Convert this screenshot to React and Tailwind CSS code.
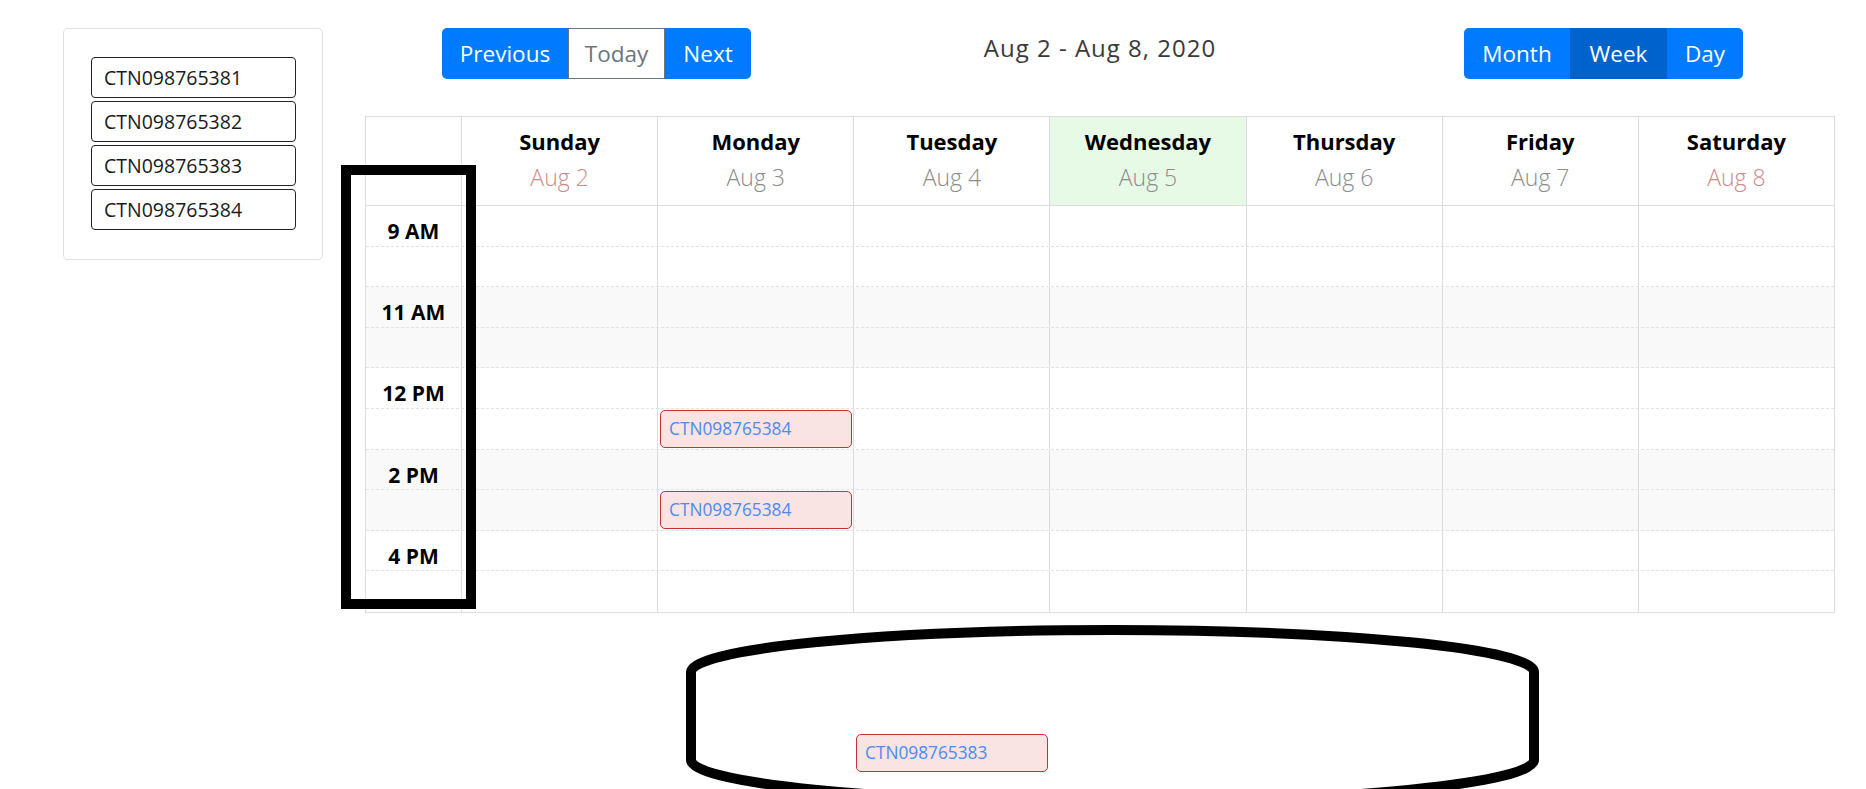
import React from "react";

const ITEMS = ["CTN098765381", "CTN098765382", "CTN098765383", "CTN098765384"];

const DAYS = [
  { name: "Sunday", date: "Aug 2", weekend: true },
  { name: "Monday", date: "Aug 3" },
  { name: "Tuesday", date: "Aug 4" },
  { name: "Wednesday", date: "Aug 5", today: true },
  { name: "Thursday", date: "Aug 6" },
  { name: "Friday", date: "Aug 7" },
  { name: "Saturday", date: "Aug 8", weekend: true },
];

const GROUPS = ["9 AM", "11 AM", "12 PM", "2 PM", "4 PM"];

const EVENTS = [
  { title: "CTN098765384", top: "top-[204px]" },
  { title: "CTN098765384", top: "top-[285px]" },
];

const EventChip = ({ title, className = "" }) => (
  <div
    className={`h-[38px] w-[192px] flex items-center pl-[8px] rounded-[5px] border border-[#c23434] bg-[#f9e3e3] text-[#4a8cf0] text-[17.3px] ${className}`}
  >
    {title}
  </div>
);

const SlotRow = ({ last }) => (
  <div
    className={`flex h-[40.6px] ${last ? "" : "border-b border-dashed border-[#e2e2e2]"}`}
  >
    <div className="w-[96px] shrink-0 border-r border-[#dddddd]" />
    {DAYS.map((d, i) => (
      <div
        key={d.name}
        className={`flex-1 ${i < 6 ? "border-r border-[#dddddd]" : ""}`}
      />
    ))}
  </div>
);

export default function App() {
  return (
    <div
      className="relative w-[1866px] h-[789px] overflow-hidden bg-white"
      style={{ fontFamily: '"Open Sans", "Noto Sans", sans-serif' }}
    >
      <div className="flex pl-[63px] pt-[28px] gap-[42px]">
        {/* sidebar list */}
        <aside className="w-[260px] self-start border border-[#e0e0e0] rounded-[5px] px-[27px] pt-[28px] pb-[29px] flex flex-col gap-[3px]">
          {ITEMS.map((item) => (
            <div
              key={item}
              className="h-[41px] w-[205px] flex items-center pl-[12px] border border-[#222] rounded-[4px] text-[19.5px] text-[#1a1a1a]"
            >
              {item}
            </div>
          ))}
        </aside>

        {/* calendar */}
        <div className="w-[1470px]">
          <div className="grid grid-cols-[1fr_auto_1fr] items-start h-[51px]">
            <div className="flex w-fit ml-[77px] h-[51px] text-[22.5px] rounded-[5px] overflow-hidden">
              <button className="w-[126px] bg-[#007bff] text-white">Previous</button>
              <button className="w-[97px] bg-white text-[#6c757d] border border-[#6c757d]">
                Today
              </button>
              <button className="w-[86px] bg-[#007bff] text-white">Next</button>
            </div>
            <div className="pt-[2px] text-[24px] tracking-[1px] text-[#3a3a3a]">
              Aug 2 - Aug 8, 2020
            </div>
            <div className="flex justify-end mr-[92px]">
              <div className="flex w-fit h-[51px] text-[22.5px] rounded-[5px] overflow-hidden">
                <button className="w-[106px] bg-[#007bff] text-white">Month</button>
                <button className="w-[97px] bg-[#0062cc] text-white">Week</button>
                <button className="w-[76px] bg-[#007bff] text-white">Day</button>
              </div>
            </div>
          </div>

          <div className="mt-[37px] border border-[#dddddd]">
            {/* header */}
            <div className="flex border-b border-[#dddddd]">
              <div className="w-[96px] shrink-0 border-r border-[#dddddd]" />
              {DAYS.map((d, i) => (
                <div
                  key={d.name}
                  className={`flex-1 flex flex-col items-center pt-[9px] pb-[13px] gap-[6px] ${
                    i < 6 ? "border-r border-[#dddddd]" : ""
                  } ${d.today ? "bg-[#e6fae6]" : ""}`}
                >
                  <span className="text-[22px] leading-[30px] font-bold text-black">
                    {d.name}
                  </span>
                  <span
                    className={`text-[23px] leading-[30px] font-light ${
                      d.weekend ? "text-[#d08a8a]" : "text-[#8c8c8c]"
                    }`}
                  >
                    {d.date}
                  </span>
                </div>
              ))}
            </div>

            {/* body */}
            <div className="relative">
              {GROUPS.map((label, g) => (
                <div
                  key={label}
                  className={`relative ${g % 2 === 1 ? "bg-[#f9f9f9]" : "bg-white"}`}
                >
                  <SlotRow />
                  <SlotRow last={g === GROUPS.length - 1} />
                  <div className="absolute left-0 top-0 w-[95px] pt-[13px] text-center text-[21px] leading-[24px] font-bold text-black">
                    {label}
                  </div>
                </div>
              ))}

              {EVENTS.map((ev, i) => (
                <EventChip key={i} title={ev.title} className={`absolute left-[294px] ${ev.top}`} />
              ))}
            </div>
          </div>
        </div>
      </div>

      {/* dragged event preview */}
      <EventChip title="CTN098765383" className="absolute left-[856px] top-[734px]" />

      {/* annotation marks */}
      <div className="absolute left-[341px] top-[165px] w-[135px] h-[444px] border-[10px] border-black pointer-events-none" />
      <svg
        className="absolute left-0 top-0 pointer-events-none"
        width="1866"
        height="789"
        viewBox="0 0 1866 789"
      >
        <path
          d="M691 760 L691 672 A421.5 42 0 0 1 1534 672 L1534 760 A421.5 42 0 0 1 691 760 Z"
          fill="none"
          stroke="black"
          strokeWidth="10"
          strokeLinejoin="round"
        />
      </svg>
    </div>
  );
}
